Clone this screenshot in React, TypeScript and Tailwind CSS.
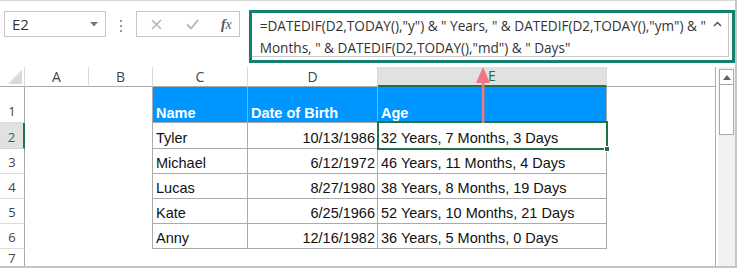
import React from "react";

const ui = { fontFamily: '"Open Sans", "Noto Sans", sans-serif' };
const cell = { fontFamily: '"Liberation Sans", Arial, sans-serif' };

const rows = [
  { n: "2", name: "Tyler", dob: "10/13/1986", age: "32 Years, 7 Months, 3 Days", h: "h-[26px]" },
  { n: "3", name: "Michael", dob: "6/12/1972", age: "46 Years, 11 Months, 4 Days", h: "h-[25px]" },
  { n: "4", name: "Lucas", dob: "8/27/1980", age: "38 Years, 8 Months, 19 Days", h: "h-[25px]" },
  { n: "5", name: "Kate", dob: "6/25/1966", age: "52 Years, 10 Months, 21 Days", h: "h-[25px]" },
  { n: "6", name: "Anny", dob: "12/16/1982", age: "36 Years, 5 Months, 0 Days", h: "h-[25px]" },
];

function RowHead({ n, active }: { n: string; active?: boolean }) {
  return (
    <div
      style={ui}
      className={`flex w-[25px] shrink-0 items-end justify-center pb-[2px] text-[13px] leading-none ${
        active
          ? "border-r-2 border-b border-r-[#217346] border-b-[#d4d4d4] bg-[#e1e1e1] text-[#217346]"
          : "border-r border-b border-r-[#ababab] border-b-[#dcdcdc] text-[#444]"
      }`}
    >
      <span className="pb-[2px]">{n}</span>
    </div>
  );
}

function Rest() {
  return <div className="w-[109px] shrink-0 border-r border-[#ababab]" />;
}

export default function App() {
  return (
    <div className="h-[268px] w-[739px] bg-white">
      <div className="relative h-[268px] w-[737px] overflow-hidden border-r-2 border-b-2 border-[#c4c4c4] bg-white">
        {/* formula bar */}
        <div className="flex h-[67px] items-start border-t border-[#d8d8d8]">
          <div
            style={ui}
            className="ml-[4px] mt-[10px] flex h-[26px] w-[102px] items-center justify-between border border-[#c6c6c6] pl-[7px] pr-[7px] text-[15px] text-[#333]"
          >
            <span>E2</span>
            <svg width="8" height="5" viewBox="0 0 8 5">
              <path d="M0 0h8L4 4.5z" fill="#777" />
            </svg>
          </div>
          <div className="mx-[14px] mt-[19px] flex flex-col gap-[3px]">
            <span className="h-[2px] w-[2px] bg-[#999]" />
            <span className="h-[2px] w-[2px] bg-[#999]" />
            <span className="h-[2px] w-[2px] bg-[#999]" />
          </div>
          <div className="mt-[10px] flex h-[26px] w-[104px] items-center border border-[#c6c6c6]">
            <svg className="ml-[14px]" width="11" height="11" viewBox="0 0 11 11">
              <path d="M1 1l9 9M10 1l-9 9" stroke="#b4b4b4" strokeWidth="1.5" />
            </svg>
            <svg className="ml-[24px]" width="13" height="11" viewBox="0 0 13 11">
              <path d="M1 5.5l4 4L12 1" stroke="#b4b4b4" strokeWidth="1.8" fill="none" />
            </svg>
            <span
              className="ml-[22px] text-[14px] italic text-[#555]"
              style={{ fontFamily: '"Liberation Serif", serif' }}
            >
              <b>f</b>x
            </span>
          </div>
          <div className="ml-[9px] mt-[9px] h-[53px] w-[487px] border-[3px] border-[#14806f] pr-[3px] pb-[3px]">
            <div className="relative h-full w-full border-r border-b border-[#c8c8c8]">
              <div
                style={ui}
                className="pl-[8px] pt-[2px] text-[13.6px] leading-[22px] text-[#333]"
              >
                <div className="whitespace-nowrap">
                  =DATEDIF(D2,TODAY(),"y") &amp; " Years, " &amp; DATEDIF(D2,TODAY(),"ym") &amp; "
                </div>
                <div className="whitespace-nowrap">
                  Months, " &amp; DATEDIF(D2,TODAY(),"md") &amp; " Days"
                </div>
              </div>
              <svg className="absolute right-[6px] top-[8px]" width="9" height="6" viewBox="0 0 9 6">
                <path d="M1 5l3.5-3.5L8 5" stroke="#555" strokeWidth="1.5" fill="none" />
              </svg>
            </div>
          </div>
        </div>

        {/* sheet */}
        <div className="flex">
          <div className="flex flex-col">
            {/* column headers */}
            <div style={ui} className="flex h-[20px] text-[14px] leading-none text-[#444]">
              <div className="relative w-[25px] shrink-0 border-r border-b border-r-[#dadada] border-b-[#ababab]">
                <svg className="absolute left-[8px] top-[3px]" width="14" height="14" viewBox="0 0 14 14">
                  <path d="M14 0v14H0z" fill="#dadada" />
                </svg>
              </div>
              <div className="flex w-[64px] shrink-0 items-center justify-center border-r border-b border-r-[#dadada] border-b-[#ababab]">A</div>
              <div className="flex w-[64px] shrink-0 items-center justify-center border-r border-b border-r-[#dadada] border-b-[#ababab]">B</div>
              <div className="flex w-[95px] shrink-0 items-center justify-center border-r border-b border-r-[#dadada] border-b-[#ababab]">C</div>
              <div className="flex w-[130px] shrink-0 items-center justify-center border-r border-b border-r-[#dadada] border-b-[#ababab]">D</div>
              <div className="flex w-[229px] shrink-0 items-center justify-center border-r border-b-2 border-r-[#dadada] border-b-[#217346] bg-[#e1e1e1] text-[#217346]">E</div>
              <div className="w-[109px] shrink-0 border-r border-b border-[#ababab]" />
            </div>

            {/* row 1 */}
            <div style={cell} className="flex h-[36px] text-[14.5px] leading-none">
              <RowHead n="1" />
              <div className="w-[64px] shrink-0" />
              <div className="w-[64px] shrink-0 border-r border-[#ababab]" />
              <div className="flex w-[95px] shrink-0 items-end border-r border-b border-[#a6a6a6] bg-[#0096ff] pb-[2px] pl-[3px] font-bold text-white">Name</div>
              <div className="flex w-[130px] shrink-0 items-end border-r border-b border-[#a6a6a6] bg-[#0096ff] pb-[2px] pl-[3px] font-bold text-white">Date of Birth</div>
              <div className="flex w-[229px] shrink-0 items-end border-r border-b border-[#a6a6a6] bg-[#0096ff] pb-[2px] pl-[3px] font-bold text-white">Age</div>
              <Rest />
            </div>

            {rows.map((r) => (
              <div key={r.n} style={cell} className={`flex ${r.h} text-[14.5px] leading-none text-[#111]`}>
                <RowHead n={r.n} active={r.n === "2"} />
                <div className="w-[64px] shrink-0" />
                <div className="w-[64px] shrink-0 border-r border-[#ababab]" />
                <div className="flex w-[95px] shrink-0 items-end border-r border-b border-[#ababab] pb-[3px] pl-[3px]">{r.name}</div>
                <div className="flex w-[130px] shrink-0 items-end justify-end border-r border-b border-[#ababab] pb-[3px] pr-[2px]">{r.dob}</div>
                <div className="flex w-[229px] shrink-0 items-end border-r border-b border-[#ababab] pb-[3px] pl-[3px]">{r.age}</div>
                <Rest />
              </div>
            ))}

            {/* row 7 */}
            <div className="flex h-[17px]">
              <div
                style={ui}
                className="flex w-[25px] shrink-0 items-end justify-center border-r border-[#ababab] text-[13px] leading-none text-[#444]"
              >
                <span className="pb-[1px]">7</span>
              </div>
              <div className="w-[582px] shrink-0" />
              <Rest />
            </div>
          </div>

          {/* scrollbar */}
          <div className="ml-[2px] flex h-[199px] w-[17px] flex-col items-center bg-[#f1f1f1] pt-[2px]">
            <div className="flex h-[16px] w-[15px] items-center justify-center border border-[#ababab] bg-white">
              <svg width="8" height="5" viewBox="0 0 8 5">
                <path d="M0 5h8L4 0z" fill="#606060" />
              </svg>
            </div>
            <div className="h-[50px] w-[15px] border border-t-0 border-[#ababab] bg-white" />
          </div>
        </div>

        {/* selection on E2 */}
        <div className="absolute left-[377px] top-[121px] h-[29px] w-[231px] border-2 border-[#217346]" />
        <div className="absolute left-[604px] top-[146px] h-[6px] w-[6px] border border-white bg-[#217346]" />

        {/* arrow */}
        <svg className="absolute left-[475px] top-[66px]" width="16" height="57" viewBox="0 0 16 57">
          <path d="M6.8 14h2.6v43H6.8z" fill="#ef7683" />
          <path d="M1 17L8 1l7 16z" fill="#ef7683" />
        </svg>
      </div>
    </div>
  );
}
